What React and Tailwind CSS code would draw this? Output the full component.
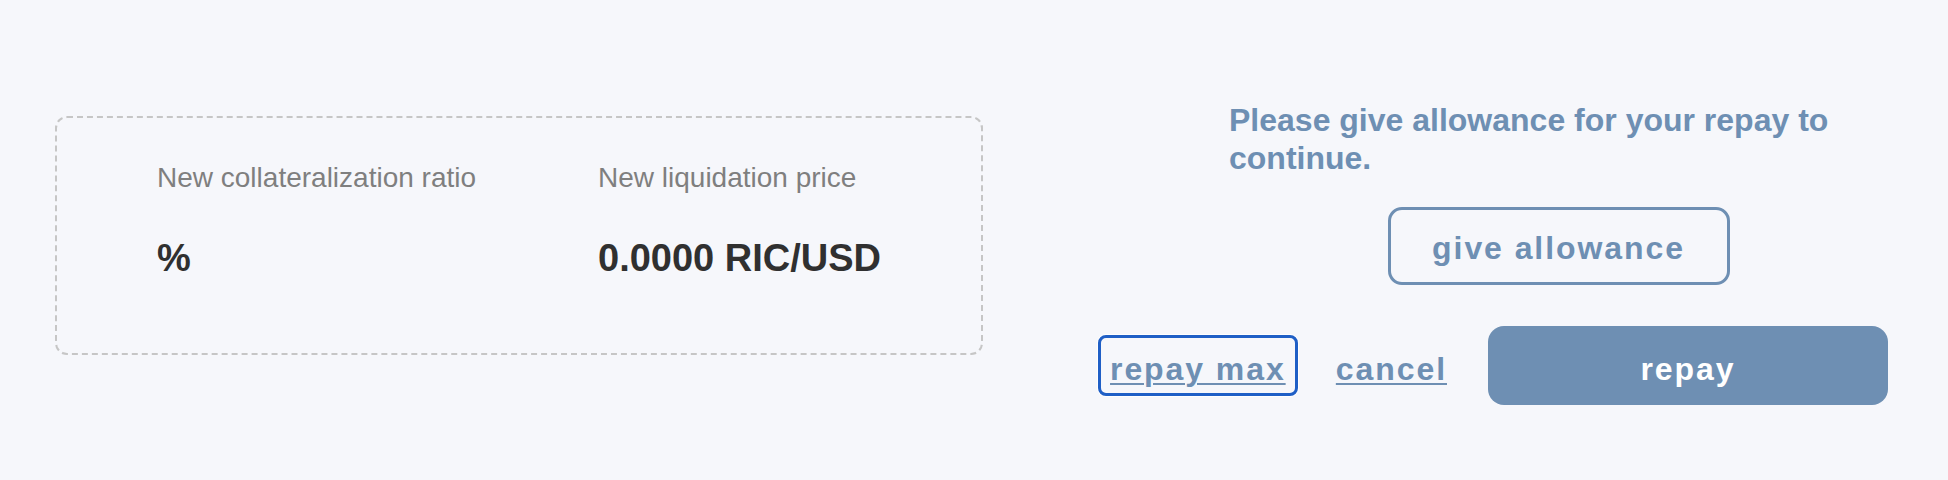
// App.jsx - repay panel with allowance prompt
import React from 'react';

const font = { fontFamily: '"Liberation Sans", Arial, Helvetica, sans-serif' };

const Stat = ({ label, value, className = '' }) => (
  <div className={className}>
    <p className="text-[28px] leading-[32px] text-[#7f7f7f]">{label}</p>
    <p className="mt-[42px] text-[38px] leading-[44px] font-bold text-[#303030]">{value}</p>
  </div>
);

const App = () => {
  return (
    <div className="min-h-screen bg-[#f6f7fb] h-[480px]" style={font}>
      <div className="flex items-start pl-[55px] pr-[60px] pt-[100px]">
        {/* Summary box */}
        <div className="mt-[16px] w-[928px] h-[239px] rounded-[12px] border-2 border-dashed border-[#c6c6c6] pl-[100px] pt-[44px] flex">
          <Stat className="w-[441px]" label="New collateralization ratio" value="%" />
          <Stat label="New liquidation price" value="0.0000 RIC/USD" />
        </div>

        {/* Actions */}
        <div className="flex-1 flex flex-col items-end">
          <div className="w-[659px] flex flex-col">
            <p className="mt-[1px] text-[32px] leading-[38px] font-bold text-[#6e8fb3]">
              Please give allowance for your repay to continue.
            </p>
            <div className="flex justify-center mt-[30px]">
              <button className="w-[342px] h-[78px] rounded-[14px] border-[3px] border-[#6e8fb3] text-[32px] font-bold tracking-[0.06em] text-[#6e8fb3] pt-[4px]">
                give allowance
              </button>
            </div>
          </div>

          <div className="flex items-center mt-[41px]">
            <button className="w-[200px] h-[61px] rounded-[8px] border-[3px] border-[#1f5fc6] ring-1 ring-white text-[32px] font-bold tracking-[0.06em] text-[#6e8fb3] underline decoration-2 underline-offset-[3px] pt-[6px]">
              repay max
            </button>
            <button className="ml-[38px] text-[32px] font-bold tracking-[0.06em] text-[#6e8fb3] underline decoration-2 underline-offset-[3px] pt-[6px]">
              cancel
            </button>
            <button className="ml-[41px] w-[400px] h-[79px] rounded-[16px] bg-[#6e8fb3] text-[32px] font-bold tracking-[0.06em] text-white pt-[6px]">
              repay
            </button>
          </div>
        </div>
      </div>
    </div>
  );
};

export default App;
